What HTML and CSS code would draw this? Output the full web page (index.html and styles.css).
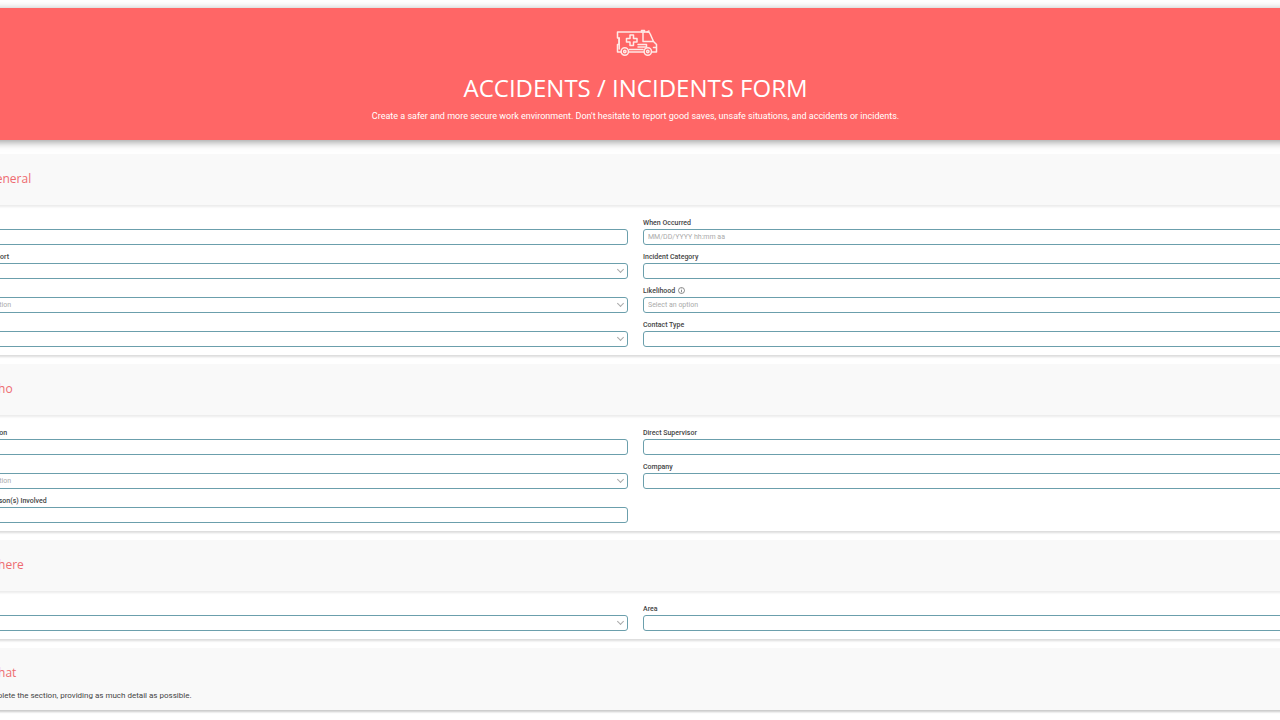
FILE: index.html
```html
<!DOCTYPE html>
<html lang="en">
<head>
    <meta charset="UTF-8">
    <meta name="viewport" content="width=device-width, initial-scale=1.0">
    <title>Accidents / Incidents Form</title>
    <link rel="stylesheet" href="styles.css">
</head>
<body>
    <form class="sheet">
        <header class="banner">
            <svg class="banner-icon" viewBox="0 0 42 28" fill="none" stroke="currentColor" stroke-width="1.5" stroke-linejoin="round" stroke-linecap="round">
                <path d="M5 23H1.500V15.500H3V9H1.500V3H27"/>
                <path d="M3.200 9V20M12.500 23H28M35.500 23H40.500V15.500L37.500 12.500L34 4.500Q33.500 3 31.500 3H27V12.500H37.500"/>
                <path d="M14 6h3.500v3.500H21V13h-3.500v3.500H14V13h-3.500V9.500H14z"/>
                <path d="M25.500 3V1.500h3V3M22 15.500h8.500M22 18h8.500M40 18.500h-2.500M13.500 20.500h13.500M30.500 15.500V18M31 3l2-1"/>
                <circle cx="8.800" cy="22.500" r="3.700"/>
                <circle cx="8.800" cy="22.500" r="1.200"/>
                <circle cx="31.800" cy="22.500" r="3.700"/>
                <circle cx="31.800" cy="22.500" r="1.200"/>
            </svg>
            <h1 class="banner-title">ACCIDENTS / INCIDENTS FORM</h1>
            <p class="banner-text">Create a safer and more secure work environment. Don't hesitate to report good saves, unsafe situations, and accidents or incidents.</p>
        </header>

        <!-- General -->
        <section class="section">
            <div class="section-head">
                <h2 class="section-title">General</h2>
            </div>
            <div class="section-body">
                <div class="field">
                    <label for="title">Title</label>
                    <input type="text" id="title" name="title">
                </div>
                <div class="field">
                    <label for="when">When Occurred</label>
                    <input type="text" id="when" name="when" placeholder="MM/DD/YYYY hh:mm aa">
                </div>
                <div class="field">
                    <label for="reportType">Cause for Report</label>
                    <div class="select-box">
                        <select id="reportType" name="reportType"><option value=""></option></select>
                    </div>
                </div>
                <div class="field">
                    <label for="category">Incident Category</label>
                    <div class="select-box">
                        <select id="category" name="category"><option value=""></option></select>
                    </div>
                </div>
                <div class="field">
                    <label for="severity">Severity</label>
                    <div class="select-box">
                        <select id="severity" name="severity" class="empty"><option value="">Select an option</option></select>
                    </div>
                </div>
                <div class="field">
                    <label for="likelihood">Likelihood
                        <svg class="info-icon" viewBox="0 0 7 7" fill="none" stroke="currentColor" stroke-width="0.6">
                            <circle cx="3.500" cy="3.500" r="3"/>
                            <path d="M3.500 3v2.300M3.500 1.600v0.700"/>
                        </svg>
                    </label>
                    <div class="select-box">
                        <select id="likelihood" name="likelihood" class="empty"><option value="">Select an option</option></select>
                    </div>
                </div>
                <div class="field">
                    <label for="injury">Injury</label>
                    <div class="select-box">
                        <select id="injury" name="injury"><option value=""></option></select>
                    </div>
                </div>
                <div class="field">
                    <label for="contactType">Contact Type</label>
                    <div class="select-box">
                        <select id="contactType" name="contactType"><option value=""></option></select>
                    </div>
                </div>
            </div>
        </section>

        <!-- Who -->
        <section class="section">
            <div class="section-head">
                <h2 class="section-title">Who</h2>
            </div>
            <div class="section-body">
                <div class="field">
                    <label for="reporter">Reporter Person</label>
                    <input type="text" id="reporter" name="reporter">
                </div>
                <div class="field">
                    <label for="supervisor">Direct Supervisor</label>
                    <input type="text" id="supervisor" name="supervisor">
                </div>
                <div class="field">
                    <label for="role">Role</label>
                    <div class="select-box">
                        <select id="role" name="role" class="empty"><option value="">Select an option</option></select>
                    </div>
                </div>
                <div class="field">
                    <label for="company">Company</label>
                    <input type="text" id="company" name="company">
                </div>
                <div class="field">
                    <label for="involved">Names of Person(s) Involved</label>
                    <input type="text" id="involved" name="involved">
                </div>
            </div>
        </section>

        <!-- Where -->
        <section class="section">
            <div class="section-head">
                <h2 class="section-title">Where</h2>
            </div>
            <div class="section-body">
                <div class="field">
                    <label for="site">Site</label>
                    <div class="select-box">
                        <select id="site" name="site"><option value=""></option></select>
                    </div>
                </div>
                <div class="field">
                    <label for="area">Area</label>
                    <input type="text" id="area" name="area">
                </div>
            </div>
        </section>

        <!-- What -->
        <section class="section">
            <div class="section-head">
                <h2 class="section-title">What</h2>
                <p class="section-text">Please complete the section, providing as much detail as possible.</p>
            </div>
        </section>
    </form>
</body>
</html>
```
FILE: styles.css
```css
* {
    box-sizing: border-box;
}
body {
    margin: 0;
    font-family: Roboto, "Noto Sans", sans-serif;
    background-color: #fff;
    color: #444;
    overflow-x: hidden;
}
/* the sheet bleeds past both window edges */
.sheet {
    display: flex;
    flex-direction: column;
    gap: 9px;
    margin: 0 -50px 0 -59px;
    padding: 8px 0;
}
.banner {
    display: flex;
    flex-direction: column;
    align-items: center;
    margin-bottom: 5px;
    padding: 21px 0 18px;
    background-color: #ff6666;
    color: #fff;
    text-align: center;
    box-shadow: 0 2px 8px rgba(0, 0, 0, 0.4);
}
.banner-icon {
    width: 42px;
    height: 28px;
    margin-left: 2px;
    color: #ffe9e6;
}
.banner-title {
    margin: 14px 0 0;
    font-family: "Open Sans", "Noto Sans", sans-serif;
    font-size: 24px;
    font-weight: 400;
    line-height: 34px;
}
.banner-text {
    margin: 5px 0 0;
    font-size: 9px;
    line-height: 12px;
}
.section {
    background-color: #fff;
    box-shadow: 0 2px 2px rgba(0, 0, 0, 0.14);
}
.section-head {
    min-height: 51px;
    padding: 16px 15px 8px;
    background-color: #f9f9f9;
    box-shadow: 0 2px 2px rgba(0, 0, 0, 0.08);
}
.section-title {
    margin: 0 0 0 31px;
    font-family: "Open Sans", "Noto Sans", sans-serif;
    font-size: 12px;
    font-weight: 400;
    line-height: 18px;
    color: #ee6b70;
}
.section-text {
    margin: 8px 0 0;
    font-size: 8px;
    line-height: 12px;
}
.section-body {
    display: grid;
    grid-template-columns: 1fr 1fr;
    gap: 6px 15px;
    padding: 12px 15px 8px;
}
.field label {
    display: flex;
    align-items: center;
    gap: 3px;
    height: 12px;
    font-size: 7px;
    font-weight: 500;
    line-height: 12px;
}
.info-icon {
    width: 7px;
    height: 7px;
    margin-bottom: 2px;
}
.field input, .field select {
    display: block;
    width: 100%;
    height: 16px;
    padding: 0 4px;
    border: 1px solid #6b9fac;
    border-radius: 3px;
    background-color: #fff;
    color: #444;
    font-family: inherit;
    font-size: 7px;
    appearance: none;
}
.field input::placeholder {
    color: #aaa;
}
.field select.empty {
    color: #aaa;
}
.select-box {
    position: relative;
}
.select-box::after {
    content: "";
    position: absolute;
    top: 4px;
    right: 5px;
    width: 4px;
    height: 4px;
    border-right: 1px solid #aaa;
    border-bottom: 1px solid #aaa;
    transform: rotate(45deg);
    pointer-events: none;
}
```
